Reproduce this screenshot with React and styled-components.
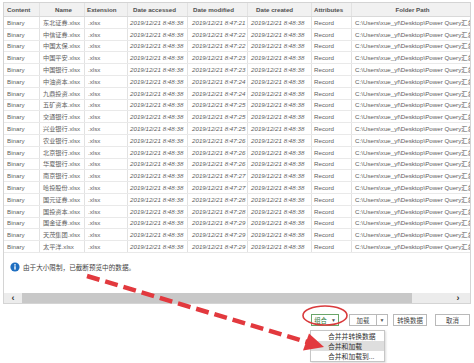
import React from 'react'
import styled, { createGlobalStyle } from 'styled-components'

const GlobalStyle = createGlobalStyle`
    html, body {
        margin: 0;
        padding: 0;
        background: #fff;
    }
`

const COLS = '36px 45px 43px 60px 60px 64px 40px 1fr'

const Page = styled.div`
    position: relative;
    width: 474px;
    height: 363px;
    overflow: hidden;
    font-family: 'Liberation Sans', 'Noto Sans CJK SC', sans-serif;
    color: #5c5c5c;
`

const Panel = styled.div`
    margin: 2px 3px 0;
    height: 302px;
    box-sizing: border-box;
    border: 1px solid #d4d4d4;
    display: flex;
    flex-direction: column;
`

const Table = styled.div`
    display: flex;
    flex-direction: column;
    overflow: hidden;
`

const Row = styled.div`
    display: grid;
    grid-template-columns: ${COLS};
    height: ${p => (p.$head ? '14px' : '11.8px')};
    box-sizing: border-box;
    background: ${p => (p.$head ? '#f1f1f1' : '#fff')};
    border-bottom: 1px solid ${p => (p.$head ? '#d9d9d9' : '#e9e9e9')};
`

const Cell = styled.div`
    display: flex;
    align-items: center;
    justify-content: ${p => (p.$center ? 'center' : 'flex-start')};
    padding: 0 0 0 ${p => p.$pad || 3}px;
    border-right: ${p => (p.$last ? 'none' : '1px solid #e2e2e2')};
    font-size: 6.2px;
    font-style: ${p => (p.$italic ? 'italic' : 'normal')};
    font-weight: ${p => (p.$head ? 'bold' : 'normal')};
    color: ${p => (p.$head ? '#505050' : '#5e5e5e')};
    white-space: nowrap;
    overflow: hidden;
`

const Info = styled.div`
    display: flex;
    align-items: center;
    gap: 3px;
    margin: 7px 0 0 6px;
    height: 14px;
    font-size: 6.6px;
    color: #444;
`

const Spacer = styled.div`
    flex: 1;
`

const ScrollBar = styled.div`
    display: flex;
    height: 10px;
    background: #ececec;
`

const ScrollArrow = styled.div`
    width: ${p => p.$w}px;
    display: flex;
    align-items: center;
    justify-content: center;
    font-size: 9px;
    font-weight: bold;
    color: #333;
`

const Thumb = styled.div`
    width: 390px;
    background: #c8c8c8;
`

const Track = styled.div`
    flex: 1;
`

const ButtonBar = styled.div`
    display: flex;
    justify-content: flex-end;
    margin-top: 10px;
    padding-right: 4px;
`

const Button = styled.div`
    margin-left: ${p => p.$ml || 0}px;
    width: ${p => p.$w}px;
    height: 12px;
    box-sizing: border-box;
    border: 1px solid ${p => (p.$primary ? '#6aa56a' : '#b9b9b9')};
    background: #fff;
    display: flex;
    align-items: center;
    justify-content: center;
    gap: 4px;
    font-size: 6.4px;
    color: ${p => (p.$primary ? '#2f7a3a' : '#444')};
`

const Caret = styled.span`
    font-size: 5px;
    color: #555;
`

const Menu = styled.div`
    position: absolute;
    left: 310px;
    top: 330px;
    width: 75px;
    box-sizing: border-box;
    border: 1px solid #c6c6c6;
    background: #fff;
    box-shadow: 1px 1px 2px rgba(0, 0, 0, 0.15);
`

const MenuItem = styled.div`
    height: 10px;
    display: flex;
    align-items: center;
    padding-left: 17px;
    font-size: 6.8px;
    color: #333;
    background: ${p => (p.$active ? '#dedede' : 'transparent')};
    white-space: nowrap;
`

const Overlay = styled.svg`
    position: absolute;
    left: 0;
    top: 0;
    pointer-events: none;
`

const names = [
    '东北证券', '中信证券', '中国太保', '中国平安', '中国银行', '中油资本', '九鼎投资',
    '五矿资本', '交通银行', '兴业银行', '农业银行', '北京银行', '华夏银行', '南京银行',
    '哈投股份', '国元证券', '国投资本', '国金证券', '天茂集团', '太平洋',
]

const modified = [21, 22, 22, 23, 23, 24, 24, 25, 25, 25, 26, 26, 26, 27, 27, 28, 28, 29, 29, 29]

const headers = [
    { label: 'Content', pad: 3 },
    { label: 'Name', center: true, pad: 0 },
    { label: 'Extension', pad: 2 },
    { label: 'Date accessed', pad: 5 },
    { label: 'Date modified', pad: 5 },
    { label: 'Date created', pad: 8 },
    { label: 'Attributes', pad: 2 },
    { label: 'Folder Path', center: true, pad: 0 },
]

const InfoIcon = () => (
    <svg width="10" height="10" viewBox="0 0 10 10">
        <circle cx="5" cy="5" r="4.6" fill="#1f6fc1" />
        <rect x="4.3" y="4.2" width="1.4" height="3.4" fill="#fff" />
        <circle cx="5" cy="2.9" r="0.8" fill="#fff" />
    </svg>
)

class App extends React.Component {
    renderRow = (name, i) => {
        return (
            <Row key={name}>
                <Cell>Binary</Cell>
                <Cell>{name}.xlsx</Cell>
                <Cell>.xlsx</Cell>
                <Cell $italic $pad={2}>2019/12/21 8:48:38</Cell>
                <Cell $italic $pad={4}>2019/12/21 8:47:{modified[i]}</Cell>
                <Cell $italic $pad={3}>2019/12/21 8:48:38</Cell>
                <Cell $pad={2}>Record</Cell>
                <Cell $last>C:\Users\xue_yf\Desktop\Power Query汇总\</Cell>
            </Row>
        )
    }

    render() {
        return (
            <Page>
                <GlobalStyle />
                <Panel>
                    <Table>
                        <Row $head>
                            {headers.map((h, i) => (
                                <Cell key={h.label} $head $center={h.center} $pad={h.pad} $last={i === headers.length - 1}>
                                    {h.label}
                                </Cell>
                            ))}
                        </Row>
                        {names.map(this.renderRow)}
                    </Table>
                    <Info>
                        <InfoIcon />
                        由于大小限制，已截断预览中的数据。
                    </Info>
                    <Spacer />
                    <ScrollBar>
                        <ScrollArrow $w={18}>‹</ScrollArrow>
                        <Thumb />
                        <Track />
                        <ScrollArrow $w={24}>›</ScrollArrow>
                    </ScrollBar>
                </Panel>
                <ButtonBar>
                    <Button $primary $w={28}>组合 <Caret>▼</Caret></Button>
                    <Button $ml={10} $w={28}>加载</Button>
                    <Button $w={11} style={{ borderLeft: 'none' }}><Caret>▼</Caret></Button>
                    <Button $ml={5} $w={34}>转换数据</Button>
                    <Button $ml={8} $w={35}>取消</Button>
                </ButtonBar>
                <Menu>
                    <MenuItem>合并并转换数据</MenuItem>
                    <MenuItem $active>合并和加载</MenuItem>
                    <MenuItem>合并和加载到...</MenuItem>
                </Menu>
                <Overlay width="474" height="363" viewBox="0 0 474 363">
                    <ellipse cx="325" cy="315.5" rx="22" ry="9.5" fill="none" stroke="#d93a3c" strokeWidth="1.6" />
                    <line x1="87" y1="276" x2="307" y2="342" stroke="#e2393e" strokeWidth="4.5" strokeDasharray="13 6" />
                    <polygon points="309,333.5 324,347 303,350.5" fill="#e2393e" />
                </Overlay>
            </Page>
        )
    }
}

export default App
